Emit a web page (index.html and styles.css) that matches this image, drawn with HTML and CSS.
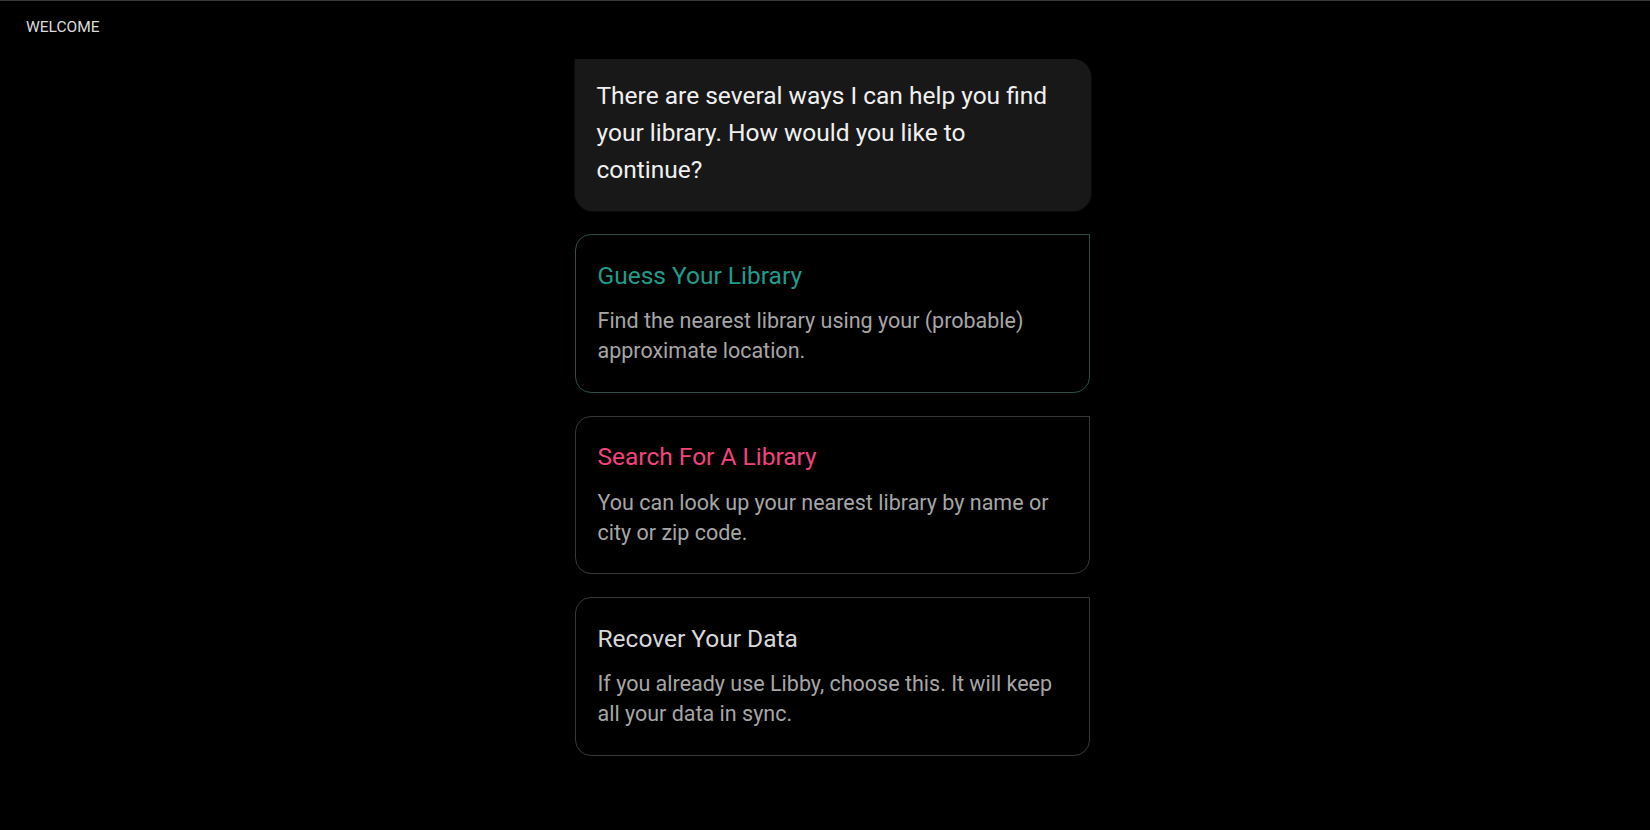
FILE: index.html
```html
<!DOCTYPE html>
<html lang="en">
<head>
<meta charset="utf-8">
<title>Welcome</title>
<link rel="stylesheet" href="styles.css">
</head>
<body>
<header class="topbar">
  <span class="topbar-title">WELCOME</span>
</header>
<main class="main">
  <section class="column">
    <div class="bubble">There are several ways I can help you find your library. How would you like to continue?</div>
    <button class="card card-guess">
      <span class="card-title">Guess Your Library</span>
      <span class="card-desc">Find the nearest library using your (probable) approximate location.</span>
    </button>
    <button class="card card-search">
      <span class="card-title">Search For A Library</span>
      <span class="card-desc">You can look up your nearest library by name or city or zip code.</span>
    </button>
    <button class="card card-recover">
      <span class="card-title">Recover Your Data</span>
      <span class="card-desc">If you already use Libby, choose this. It will keep all your data in sync.</span>
    </button>
  </section>
</main>
</body>
</html>
```
FILE: styles.css
```css
html, body {
  margin: 0;
  padding: 0;
  background: #000;
  height: 100%;
}
body {
  font-family: Roboto, "Liberation Sans", sans-serif;
  color: #e6e6e6;
  border-top: 1px solid #3a3a3a;
  box-sizing: border-box;
}
.topbar {
  height: 48px;
  padding: 0 26px;
  display: flex;
  align-items: flex-start;
}
.topbar-title {
  font-size: 15.5px;
  line-height: 20px;
  margin-top: 16px;
  color: #dcdcdc;
}
.main {
  display: flex;
  justify-content: center;
  padding-left: 15px;
  margin-top: 10px;
}
.column {
  width: 516px;
  display: flex;
  flex-direction: column;
  gap: 23px;
}
.bubble {
  background: #181818;
  border-radius: 0 18px 18px 18px;
  padding: 18px 30px 22px 22px;
  font-size: 24.5px;
  line-height: 37px;
  color: #f0f0f0;
  box-shadow: 0 1px 2px rgba(60, 60, 60, 0.6);
  margin-bottom: 1px;
}
.card {
  all: unset;
  box-sizing: border-box;
  width: 515px;
  display: flex;
  flex-direction: column;
  border: 1.5px solid #383838;
  border-radius: 16px 0 16px 16px;
  padding: 24.5px 21px 25.5px 22px;
  cursor: pointer;
  font-family: Roboto, "Liberation Sans", sans-serif;
}
.card-guess {
  border-color: #2d4d49;
}
.card-title {
  font-size: 24.5px;
  line-height: 32px;
  margin-bottom: 14.5px;
}
.card-desc {
  font-size: 21.5px;
  line-height: 30px;
  color: #a6a6a6;
}
.card-guess .card-title {
  color: #1f9c8d;
}
.card-search .card-title {
  color: #f2437c;
}
.card-recover .card-title {
  color: #d8d8d8;
}
```
